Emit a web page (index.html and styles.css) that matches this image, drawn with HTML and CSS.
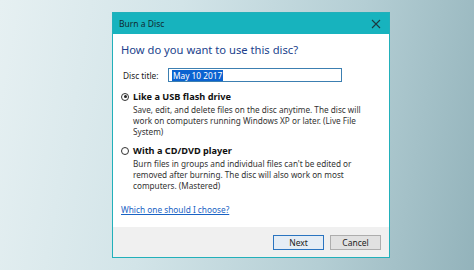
FILE: index.html
```html
<!DOCTYPE html>
<html lang="en">
<head>
    <meta charset="UTF-8">
    <meta name="viewport" content="width=device-width, initial-scale=1.0">
    <title>Burn a Disc</title>
    <link rel="stylesheet" href="styles.css">
</head>
<body>
    <div class="dialog">
        <div class="titlebar">
            <span class="title">Burn a Disc</span>
            <svg class="close" width="10" height="10" viewBox="0 0 10 10">
                <path d="M1 1 L9 9 M9 1 L1 9" stroke="#1d3a40" stroke-width="1.1" fill="none"/>
            </svg>
        </div>
        <div class="content">
            <h1>How do you want to use this disc?</h1>
            <div class="field">
                <label for="dt">Disc title:</label>
                <div class="input" id="dt"><span class="sel">May 10 2017</span></div>
            </div>
            <div class="option">
                <div class="opt-head"><span class="radio checked"></span><b>Like a USB flash drive</b></div>
                <p class="desc">Save, edit, and delete files on the disc anytime. The disc will work on computers running Windows XP or later. (Live File System)</p>
            </div>
            <div class="option">
                <div class="opt-head"><span class="radio"></span><b>With a CD/DVD player</b></div>
                <p class="desc">Burn files in groups and individual files can't be edited or removed after burning. The disc will also work on most computers. (Mastered)</p>
            </div>
            <a class="help" href="#">Which one should I choose?</a>
        </div>
        <div class="footer">
            <button class="btn default">Next</button>
            <button class="btn">Cancel</button>
        </div>
    </div>
</body>
</html>
```

FILE: styles.css
```css
body {
    margin: 0;
    height: 270px;
    padding: 12px 0 0 112px;
    box-sizing: border-box;
    font-family: "Noto Sans", "Open Sans", sans-serif;
    background: linear-gradient(100deg, #e6f0f2 0%, #d2e4e8 35%, #b4ced4 70%, #93b3bb 100%);
    overflow: hidden;
}

.dialog {
    width: 276px;
    border: 1px solid #22b0ba;
    background: #fff;
}

.titlebar {
    height: 21px;
    background: #17b3be;
    display: flex;
    align-items: center;
    justify-content: space-between;
    padding: 0 8px 0 6px;
}

.title {
    font-size: 8.5px;
    color: #0f2a30;
}

.content {
    padding: 7px 8px 12px 8px;
}

h1 {
    margin: 0 0 9px 0;
    font-size: 11.2px;
    line-height: 18px;
    font-weight: normal;
    color: #213f8c;
}

.field {
    display: flex;
    align-items: center;
    margin-bottom: 9px;
}

.field label {
    width: 45px;
    padding-left: 2px;
    font-size: 8.3px;
    color: #222;
}

.input {
    width: 166px;
    height: 12px;
    border: 1px solid #3c7fb1;
    padding: 0 3px;
    display: flex;
    align-items: center;
}

.sel {
    background: #0a62d0;
    color: #fff;
    font-size: 8.3px;
    line-height: 11px;
    padding: 0 1px;
}

.option {
    margin-bottom: 8px;
}

.opt-head {
    display: flex;
    align-items: center;
    gap: 4px;
    font-size: 9.2px;
    line-height: 11px;
    color: #111;
}

.radio {
    width: 8px;
    height: 8px;
    border: 1px solid #333;
    border-radius: 50%;
    box-sizing: border-box;
    position: relative;
}

.radio.checked::after {
    content: "";
    position: absolute;
    left: 1.5px;
    top: 1.5px;
    width: 3px;
    height: 3px;
    border-radius: 50%;
    background: #222;
}

.desc {
    margin: 2px 0 0 12px;
    width: 240px;
    font-size: 8.2px;
    line-height: 11px;
    color: #333;
}

.help {
    display: block;
    margin-top: 13px;
    font-size: 8.3px;
    line-height: 11px;
    color: #1a63c4;
}

.footer {
    background: #f0f0f0;
    height: 30px;
    display: flex;
    align-items: center;
    justify-content: flex-end;
    gap: 6px;
    padding-right: 8px;
}

.btn {
    width: 51px;
    height: 15px;
    padding: 0;
    font-family: inherit;
    font-size: 8.5px;
    color: #222;
    background: #e1e1e1;
    border: 1px solid #adadad;
}

.btn.default {
    border-color: #2a74c0;
    background: #e5edf5;
}
```
